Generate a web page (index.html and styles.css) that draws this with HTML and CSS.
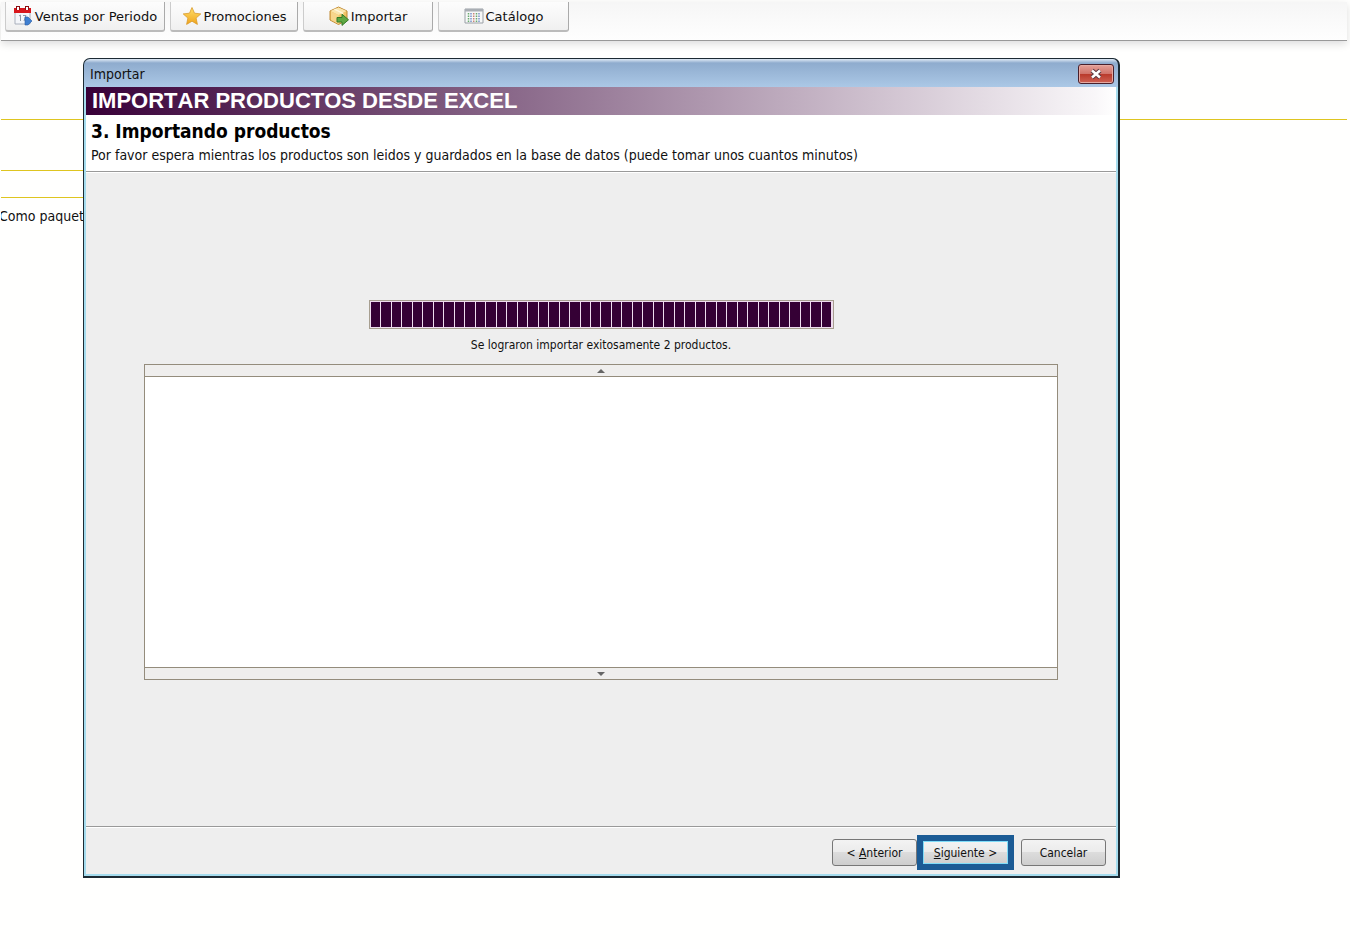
FILE: index.html
```html
<!DOCTYPE html>
<html lang="es">
<head>
    <meta charset="UTF-8">
    <meta name="viewport" content="width=device-width, initial-scale=1.0">
    <title>Importar productos</title>
    <link rel="stylesheet" href="styles.css">
</head>
<body>

    <nav class="toolbar">
        <button type="button" class="tool ventas">
            <svg width="20" height="20" viewBox="0 0 20 20">
                <path d="M2 6h15v12H2z" fill="#f4f6fa" stroke="#aab0bc"/>
                <path d="M1 2h17v5H1z" fill="#d8161c"/>
                <path d="M5 0v4M14 0v4" stroke="#8c1014" stroke-width="4"/>
                <path d="M5 1v3M14 1v3" stroke="#fff" stroke-width="2"/>
                <path d="M6 10l1.500-1v6M10 9.500h3l-2 5.500" fill="none" stroke="#8e97a6"/>
                <path d="M12 11h3l4 4-4 4h-3z" fill="#3f7fd0" stroke="#2a5ca5" stroke-width=".6"/>
            </svg>
            Ventas por Periodo
        </button>
        <button type="button" class="tool promociones">
            <svg width="20" height="20" viewBox="0 0 20 20">
                <defs>
                    <linearGradient id="oro" x1="0" y1="0" x2="0" y2="1">
                        <stop offset="0" stop-color="#ffe069"/>
                        <stop offset="1" stop-color="#f0a31c"/>
                    </linearGradient>
                </defs>
                <path d="M10 1.500l2.500 5.700 6.300.7-4.700 4.200 1.300 6.300L10 15.200l-5.400 3.200 1.300-6.300L1.200 7.900l6.300-.7z" fill="url(#oro)" stroke="#d99a2b" stroke-width=".8"/>
            </svg>
            Promociones
        </button>
        <button type="button" class="tool importar">
            <svg width="20" height="20" viewBox="0 0 20 20">
                <path d="M9.500 1l8.500 4v9l-8.500 4.500L1 14V5z" fill="#f0c468" stroke="#c08a34"/>
                <path d="M1.500 5l8 4 8-4-8-3.500z" fill="#fae6ae"/>
                <path d="M9.500 9v9L2 14V5.500z" fill="#f7d68c"/>
                <path d="M5.500 3.200l8 4v3" fill="none" stroke="#fff7dd" stroke-width="1.500"/>
                <path d="M8 11.500h5V8.200l6.500 5.600-6.500 5.600V16H8z" fill="#5fa843" stroke="#347a26"/>
            </svg>
            Importar
        </button>
        <button type="button" class="tool catalogo">
            <svg width="20" height="20" viewBox="0 0 20 20">
                <path d="M1 3h18v14H1z" fill="#f7f8f8" stroke="#9aa0a6"/>
                <path d="M1 3h18v2.500H1z" fill="#a9aeb4"/>
                <path d="M4.500 7v9M12.500 7v9" stroke="#68aa6e" stroke-width="1.500" stroke-dasharray="1.500 1"/>
                <path d="M7 7v9M15 7v9" stroke="#7a91c9" stroke-width="1.500" stroke-dasharray="1.500 1"/>
                <path d="M9.700 7v9" stroke="#c9867a" stroke-width="1.500" stroke-dasharray="1.500 1"/>
            </svg>
            Catálogo
        </button>
    </nav>

    <main class="fondo">
        <div class="linea"></div>
        <div class="columna">
            <p>Como paquete</p>
        </div>
    </main>

    <section class="ventana" role="dialog" aria-labelledby="titulo">
        <header class="barra">
            <span id="titulo">Importar</span>
            <button type="button" class="cerrar" aria-label="Cerrar">
                <svg width="14" height="12" viewBox="0 0 14 12">
                    <path d="M3 2.500l8 7M11 2.500l-8 7" stroke="#5b3a42" stroke-width="4.500"/>
                    <path d="M3 2.500l8 7M11 2.500l-8 7" stroke="#fff" stroke-width="2.500"/>
                </svg>
            </button>
        </header>

        <div class="contenido">
            <h1>IMPORTAR PRODUCTOS DESDE EXCEL</h1>

            <div class="paso">
                <h2>3. Importando productos</h2>
                <p>Por favor espera mientras los productos son leidos y guardados en la base de datos (puede tomar unos cuantos minutos)</p>
            </div>

            <div class="cuerpo">
                <progress id="avance" value="100" max="100"></progress>
                <label for="avance">Se lograron importar exitosamente 2 productos.</label>

                <div class="lista">
                    <button type="button" class="flecha" aria-label="Subir">
                        <svg width="8" height="4" viewBox="0 0 8 4"><path d="M0 4l4-4 4 4z" fill="#666"/></svg>
                    </button>
                    <div class="mensajes"></div>
                    <button type="button" class="flecha" aria-label="Bajar">
                        <svg width="8" height="4" viewBox="0 0 8 4"><path d="M0 0l4 4 4-4z" fill="#666"/></svg>
                    </button>
                </div>
            </div>

            <footer class="acciones">
                <button type="button" class="boton">&lt; <u>A</u>nterior</button>
                <button type="button" class="boton siguiente"><u>S</u>iguiente &gt;</button>
                <button type="button" class="boton">Cancelar</button>
            </footer>
        </div>
    </section>

</body>
</html>
```

FILE: styles.css
```css
* {
    box-sizing: border-box;
}

body {
    margin: 0;
    padding: 2px 3px 0 1px;
    background-color: #fffffe;
    color: #111;
    font-family: "DejaVu Sans Condensed", "DejaVu Sans", sans-serif;
    font-size: 14px;
}

h1, h2, p {
    margin: 0;
}

button {
    font-family: inherit;
    color: inherit;
    padding: 0;
}

/* barra de herramientas */

.toolbar {
    display: flex;
    gap: 5px;
    height: 39px;
    padding: 0 4px 8px;
    border-bottom: 1px solid #999;
    background-image: linear-gradient(#f6f6f6, #fefefe);
    box-shadow: 0 3px 8px #ddd;
}

.tool {
    display: flex;
    align-items: center;
    justify-content: center;
    gap: 2px;
    border: 1px solid #ccc;
    border-top: 0;
    border-right-color: #aaa;
    border-bottom: 2px solid #bbb;
    border-radius: 0 0 3px 3px;
    background-image: linear-gradient(#fdfdfd, #f0f0f0);
    font-family: "DejaVu Sans", sans-serif;
    font-size: 13px;
    white-space: nowrap;
}

.ventas {
    width: 160px;
}

.promociones {
    width: 128px;
}

.importar {
    width: 130px;
}

.catalogo {
    width: 131px;
}

/* pagina de atras */

.linea {
    height: 79px;
    border-bottom: 1px solid #dec520;
}

.columna {
    width: 200px;
    margin-top: 50px;
    padding-top: 26px;
    border-top: 1px solid #dec520;
    overflow: hidden;
}

.columna p {
    border-top: 1px solid #dec520;
    padding-top: 8px;
    line-height: 20px;
    text-indent: -2px;
}

/* ventana */

.ventana {
    position: absolute;
    top: 58px;
    right: 230px;
    bottom: 71px;
    left: 83px;
    display: flex;
    flex-direction: column;
    padding: 0 2px 2px;
    border: 1px solid #1c2a33;
    border-right-width: 2px;
    border-bottom-width: 2px;
    border-radius: 7px 7px 0 0;
    background-color: #a5dcee;
    background-image: linear-gradient(#dfeaf5, #8facce 4px, #abc8e6 28px, transparent 28px);
}

.barra {
    display: flex;
    align-items: center;
    justify-content: space-between;
    height: 28px;
    padding: 2px 2px 0 4px;
}

.cerrar {
    display: flex;
    align-items: center;
    justify-content: center;
    width: 36px;
    height: 20px;
    border: 1px solid #49202c;
    border-radius: 3px;
    background-image: linear-gradient(#e5a198, #d0736a 48%, #b8382a 50%, #cf6355);
    box-shadow: inset 0 0 0 1px #e6aaa2;
}

.contenido {
    flex: 1;
    display: flex;
    flex-direction: column;
    background-color: #eee;
}

h1 {
    padding-left: 6px;
    background-image: linear-gradient(to right, #380038, #f9f7f9 98%, #fff);
    color: #fff;
    font-family: "Liberation Sans", sans-serif;
    font-size: 22px;
    font-kerning: none;
    line-height: 28px;
}

.paso {
    height: 57px;
    padding: 3px 5px 0;
    border-bottom: 1px solid #999;
    background-color: #fff;
}

.paso h2 {
    color: #000;
    font-size: 19px;
    line-height: 26px;
}

.paso p {
    line-height: 22px;
}

.cuerpo {
    flex: 1;
    display: flex;
    flex-direction: column;
    align-items: center;
    padding: 127px 58px 146px;
    border-top: 1px solid #fff;
    border-bottom: 1px solid #999;
    font-size: 12px;
}

progress {
    appearance: none;
    width: 465px;
    height: 29px;
    padding: 1px;
    border: 1px solid #a79f90;
    background-color: #eedcee;
}

progress::-webkit-progress-bar {
    background-color: #eedcee;
}

progress::-webkit-progress-value {
    background-image: repeating-linear-gradient(to right, #350035 0, #350035 calc(100% / 44 - 1px), #eedcee calc(100% / 44 - 1px), #eedcee calc(100% / 44));
}

.cuerpo label {
    margin-top: 6px;
    line-height: 20px;
}

.lista {
    flex: 1;
    align-self: stretch;
    display: flex;
    flex-direction: column;
    margin-top: 9px;
    border: 1px solid #948c7c;
}

.mensajes {
    flex: 1;
    border: 1px solid #948c7c;
    border-width: 1px 0;
    background-color: #fff;
}

.flecha {
    display: flex;
    align-items: center;
    justify-content: center;
    height: 11px;
    border: 0;
    background-color: #efeeed;
}

.acciones {
    display: flex;
    align-items: center;
    justify-content: flex-end;
    height: 47px;
    padding: 3px 10px 0;
    border-top: 1px solid #fff;
}

.boton {
    width: 85px;
    height: 27px;
    border: 1px solid #777;
    border-radius: 3px;
    background-image: linear-gradient(#f3f3f3, #ebebeb 48%, #dcdcdc 50%, #cecece);
    font-size: 12px;
}

.siguiente {
    width: 97px;
    height: 35px;
    margin-right: 7px;
    border: 6px solid #1b5b95;
    border-radius: 0;
    background-clip: padding-box;
    box-shadow: inset 0 0 0 1px #7fdcf8;
}
```
